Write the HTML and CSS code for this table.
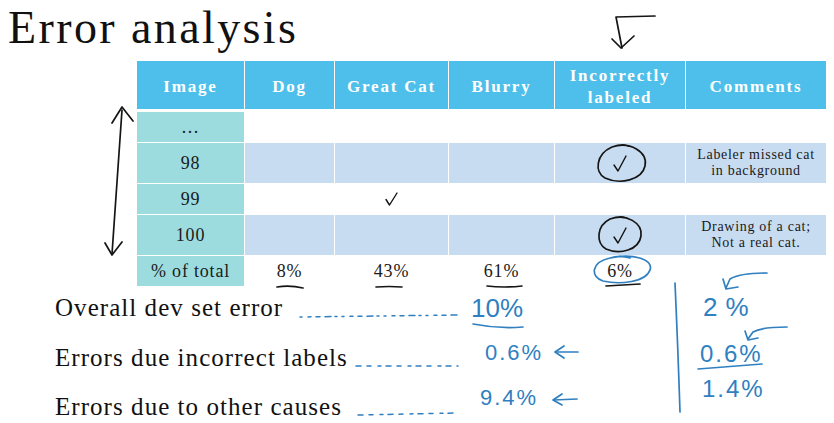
FILE: index.html
```html
<!DOCTYPE html>
<html lang="en">
<head>
<meta charset="utf-8">
<title>Error analysis</title>
<link rel="stylesheet" href="styles.css">
</head>
<body>
<div class="slide">
  <h1 class="title">Error analysis</h1>

  <div class="table">
    <div class="row head">
      <div class="cell">Image</div>
      <div class="cell">Dog</div>
      <div class="cell">Great Cat</div>
      <div class="cell">Blurry</div>
      <div class="cell">Incorrectly<br>labeled</div>
      <div class="cell">Comments</div>
    </div>
    <div class="row short">
      <div class="cell id">…</div>
      <div class="cell"></div><div class="cell"></div><div class="cell"></div><div class="cell"></div><div class="cell"></div>
    </div>
    <div class="row tall shade">
      <div class="cell id">98</div>
      <div class="cell"></div><div class="cell"></div><div class="cell"></div>
      <div class="cell"><svg class="check big" viewBox="0 0 14 17" width="14" height="17"><path d="M1 10 L5 16 L13 1"/></svg></div>
      <div class="cell comment">Labeler missed cat<br>in background</div>
    </div>
    <div class="row short">
      <div class="cell id">99</div>
      <div class="cell"></div>
      <div class="cell"><svg class="check" viewBox="0 0 13 14" width="13" height="14"><path d="M1 7.5 L4.5 13 L12 1"/></svg></div>
      <div class="cell"></div><div class="cell"></div><div class="cell"></div>
    </div>
    <div class="row tall shade">
      <div class="cell id">100</div>
      <div class="cell"></div><div class="cell"></div><div class="cell"></div>
      <div class="cell"><svg class="check big" viewBox="0 0 14 17" width="14" height="17"><path d="M1 10 L5 16 L13 1"/></svg></div>
      <div class="cell comment">Drawing of a cat;<br>Not a real cat.</div>
    </div>
    <div class="row short">
      <div class="cell id">% of total</div>
      <div class="cell">8%</div>
      <div class="cell">43%</div>
      <div class="cell">61%</div>
      <div class="cell">6%</div>
      <div class="cell"></div>
    </div>
  </div>

  <div class="summary">
    <div class="sum-row">Overall dev set error</div>
    <div class="sum-row">Errors due incorrect labels</div>
    <div class="sum-row">Errors due to other causes</div>
  </div>

  <div class="ink">
    <svg class="strokes" viewBox="0 0 834 423" width="834" height="423">
      <g class="black">
        <path d="M122 110 Q117 180 112 254"/>
        <path d="M112 123 L122 107 L133 121"/>
        <path d="M105 243 L112 255 L122 242"/>
        <path d="M655 16 L616 17 L622 48"/>
        <path d="M612 39 L621 48 L634 36"/>
        <path d="M612 147 C630 141 648 152 645 166 C642 180 620 185 605 178 C594 172 596 154 612 147 C618 145 624 144 628 146"/>
        <path d="M610 219 C626 213 643 223 641 236 C639 250 620 255 606 249 C596 243 596 226 610 219 C616 217 622 216 626 218"/>
        <path d="M277 287 Q290 285 303 288"/>
        <path d="M376 287 Q389 286 402 287"/>
        <path d="M487 286 Q504 288 522 286"/>
        <path d="M606 286 L640 284"/>
      </g>
      <g class="blue">
        <path d="M610 258 C632 253 654 259 650 270 C646 282 620 285 603 281 C590 277 591 262 610 258 C616 256 624 256 630 258"/>
        <path class="dash" d="M300 317 L458 315"/>
        <path class="dash2" d="M356 366 L458 366"/>
        <path class="dash2" d="M358 415 L455 413"/>
        <path d="M473 324 Q498 329 523 327"/>
        <path d="M578 352 L556 352"/>
        <path d="M564 346 L555 352 L564 358"/>
        <path d="M577 399 L554 400"/>
        <path d="M562 394 L553 400 L562 405"/>
        <path d="M675 283 Q678 350 680 412"/>
        <path d="M767 273 Q740 273 730 279 L726 288"/>
        <path d="M723 279 L726 289 L738 287"/>
        <path d="M787 327 Q762 327 753 332 L748 339"/>
        <path d="M745 331 L748 340 L758 338"/>
        <path d="M698 369 L762 364"/>
      </g>
    </svg>
    <span class="hand h-10">10%</span>
    <span class="hand sm h-06a">0.6%</span>
    <span class="hand sm h-94">9.4%</span>
    <span class="hand h-2">2%</span>
    <span class="hand md h-06b">0.6%</span>
    <span class="hand md h-14">1.4%</span>
  </div>
</div>
</body>
</html>
```

FILE: styles.css
```css
html, body {
  margin: 0;
  padding: 0;
  background: #ffffff;
}

.slide {
  position: relative;
  width: 834px;
  height: 423px;
  overflow: hidden;
  font-family: "Liberation Serif", "Times New Roman", serif;
  color: #1a1a1a;
}

.title {
  margin: 0;
  padding: 3px 0 0 8px;
  font-family: "Liberation Serif", "Times New Roman", serif;
  font-size: 46px;
  line-height: 50px;
  font-weight: normal;
  letter-spacing: 2.4px;
  color: #111;
}

.table {
  margin: 8px 0 0 137px;
  display: flex;
  flex-direction: column;
  gap: 1px;
  width: 689px;
}

.row {
  display: grid;
  grid-template-columns: 107px 89px 113px 105px 130px 140px;
  column-gap: 1px;
}

.row.head {
  height: 48px;
  margin-bottom: 2px;
}

.row.short { height: 30px; }
.row.tall { height: 40px; }

.cell {
  display: flex;
  align-items: center;
  justify-content: center;
  text-align: center;
  font-family: "Liberation Serif", "Times New Roman", serif;
  font-size: 18px;
  letter-spacing: 0.8px;
  color: #1a1a1a;
}

.head .cell {
  background: #4dbfea;
  color: #ffffff;
  font-size: 17px;
  font-weight: bold;
  letter-spacing: 1.8px;
  line-height: 22px;
  padding-top: 3px;
}

.shade .cell { background: #c8dcf1; }

.cell.id,
.shade .cell.id { background: #9cdcdf; }

.cell.comment {
  font-size: 14px;
  letter-spacing: 0.7px;
  line-height: 16px;
}

.check {
  display: block;
}

.check path {
  fill: none;
  stroke: #111;
  stroke-width: 1.4;
  stroke-linecap: round;
  stroke-linejoin: round;
}

.check.big {
  margin-top: 1px;
}

.summary {
  margin: -3px 0 0 55px;
}

.sum-row {
  font-family: "Liberation Serif", "Times New Roman", serif;
  font-size: 25px;
  line-height: 49.5px;
  letter-spacing: 1.05px;
  color: #111;
}

.ink {
  position: absolute;
  inset: 0;
  pointer-events: none;
}

.strokes {
  position: absolute;
  left: 0;
  top: 0;
}

.strokes path {
  fill: none;
  stroke-width: 1.7;
  stroke-linecap: round;
  stroke-linejoin: round;
}

.black path { stroke: #151515; }
.blue path { stroke: #2f7fc1; }

.blue .dash {
  stroke-width: 1.5;
  stroke-dasharray: 2 6 3 5 4 5 6 4 2 5;
}

.blue .dash2 {
  stroke-width: 1.5;
  stroke-dasharray: 5 6 4 7 3 5;
}

.hand {
  position: absolute;
  font-family: "Liberation Sans", Arial, sans-serif;
  color: #2f7fc1;
  font-size: 26px;
  line-height: 1;
  letter-spacing: 0;
}

.hand.sm { font-size: 22px; letter-spacing: 2px; }
.hand.md { font-size: 24px; letter-spacing: 2px; }

.h-10 { left: 471px; top: 295px; }
.h-06a { left: 485px; top: 342px; }
.h-94 { left: 480px; top: 387px; }
.h-2 { left: 703px; top: 294px; letter-spacing: 8px; }
.h-06b { left: 700px; top: 342px; }
.h-14 { left: 702px; top: 377px; }
```
